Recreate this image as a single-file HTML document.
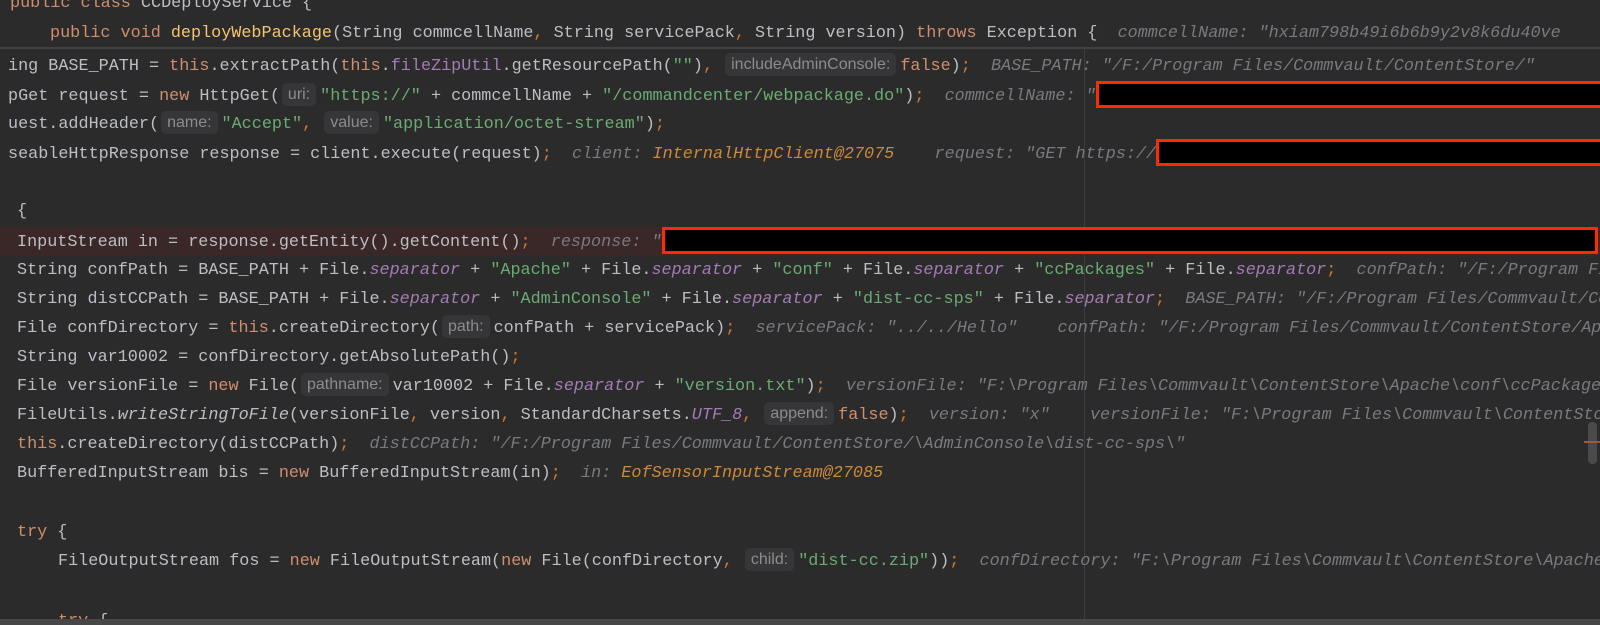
<!DOCTYPE html>
<html><head><meta charset="utf-8"><style>
html,body{margin:0;padding:0;overflow:hidden;}
body{width:1600px;height:625px;overflow:hidden;background:#2b2b2b;position:relative;font-family:"Liberation Mono",monospace;font-size:16.8px;color:#bcbec4;}
.wrap{position:absolute;left:0;top:0;width:1600px;height:625px;overflow:hidden;}
.l{position:absolute;white-space:pre;height:29px;line-height:29px;}
.k{color:#cf8e6d}.s{color:#6aab73}.f{color:#a57bb5;font-style:italic}.y{color:#f5c46e}
.o{color:#cc7832}
.c{color:#787a7f;font-style:italic}
.ci{color:#cc8a36;font-style:italic}
.h{display:inline-block;font-family:"Liberation Sans",sans-serif;font-size:16px;color:#8c8c8c;background:#363638;border-radius:5px;padding:0 6px;line-height:23px;height:23px;vertical-align:1px;margin:0 4px 0 2px;}
.box{display:inline-block;background:#000;border:3px solid #ff2a00;height:21px;vertical-align:-8px;box-sizing:content-box;}
.it{font-style:italic}
</style></head><body><div class="wrap">
<div style="position:absolute;left:0;top:47px;width:1600px;height:2px;background:#414141"></div>
<div style="position:absolute;left:0;top:227px;width:1600px;height:29px;background:#3a2727"></div>
<div style="position:absolute;left:1084px;top:49px;width:1px;height:570px;background:#3d3d3d"></div>

<div class="l" style="left:10px;top:-11px"><span class="k">public class</span> CCDeployService {</div>
<div class="l" style="left:50px;top:19px"><span class="k">public void</span> <span class="y">deployWebPackage</span>(String commcellName<span class="o">,</span> String servicePack<span class="o">,</span> String version) <span class="k">throws</span> Exception {  <span class="c">commcellName: "hxiam798b49i6b6b9y2v8k6du40ve</span></div>

<div class="l" style="left:8px;top:52px">ing BASE_PATH = <span class="k">this</span>.extractPath(<span class="k">this</span>.<span class="f" style="font-style:normal">fileZipUtil</span>.getResourcePath(<span class="s">""</span>)<span class="o">,</span> <span class="h">includeAdminConsole:</span><span class="k">false</span>)<span class="o">;</span>  <span class="c">BASE_PATH: "/F:/Program Files/Commvault/ContentStore/"</span></div>
<div class="l" style="left:8px;top:81px">pGet request = <span class="k">new</span> HttpGet(<span class="h">uri:</span><span class="s">"https://"</span> + commcellName + <span class="s">"/commandcenter/webpackage.do"</span>)<span class="o">;</span>  <span class="c">commcellName: "</span><span class="box" style="width:520px"></span></div>
<div class="l" style="left:8px;top:110px">uest.addHeader(<span class="h">name:</span><span class="s">"Accept"</span><span class="o">,</span> <span class="h">value:</span><span class="s">"application/octet-stream"</span>)<span class="o">;</span></div>
<div class="l" style="left:8px;top:139px">seableHttpResponse response = client.execute(request)<span class="o">;</span>  <span class="c">client: </span><span class="ci">InternalHttpClient@27075</span>    <span class="c">request: "GET https://</span><span class="box" style="width:460px"></span></div>
<div class="l" style="left:17px;top:197px">{</div>
<div class="l" style="left:17px;top:227px">InputStream in = response.getEntity().getContent()<span class="o">;</span>  <span class="c">response: "</span><span class="box" style="width:930px"></span></div>
<div class="l" style="left:17px;top:256px">String confPath = BASE_PATH + File.<span class="f">separator</span> + <span class="s">"Apache"</span> + File.<span class="f">separator</span> + <span class="s">"conf"</span> + File.<span class="f">separator</span> + <span class="s">"ccPackages"</span> + File.<span class="f">separator</span><span class="o">;</span>  <span class="c">confPath: "/F:/Program Files/Commvault/ContentStore/Apache"</span></div>
<div class="l" style="left:17px;top:285px">String distCCPath = BASE_PATH + File.<span class="f">separator</span> + <span class="s">"AdminConsole"</span> + File.<span class="f">separator</span> + <span class="s">"dist-cc-sps"</span> + File.<span class="f">separator</span><span class="o">;</span>  <span class="c">BASE_PATH: "/F:/Program Files/Commvault/ContentStore/"</span></div>
<div class="l" style="left:17px;top:314px">File confDirectory = <span class="k">this</span>.createDirectory(<span class="h">path:</span>confPath + servicePack)<span class="o">;</span>  <span class="c">servicePack: "../../Hello"    confPath: "/F:/Program Files/Commvault/ContentStore/Apache"</span></div>
<div class="l" style="left:17px;top:343px">String var10002 = confDirectory.getAbsolutePath()<span class="o">;</span></div>
<div class="l" style="left:17px;top:372px">File versionFile = <span class="k">new</span> File(<span class="h">pathname:</span>var10002 + File.<span class="f">separator</span> + <span class="s">"version.txt"</span>)<span class="o">;</span>  <span class="c">versionFile: "F:\Program Files\Commvault\ContentStore\Apache\conf\ccPackages"</span></div>
<div class="l" style="left:17px;top:401px">FileUtils.<span class="it">writeStringToFile</span>(versionFile<span class="o">,</span> version<span class="o">,</span> StandardCharsets.<span class="f">UTF_8</span><span class="o">,</span> <span class="h">append:</span><span class="k">false</span>)<span class="o">;</span>  <span class="c">version: "x"    versionFile: "F:\Program Files\Commvault\ContentStore\Apache"</span></div>
<div class="l" style="left:17px;top:430px"><span class="k">this</span>.createDirectory(distCCPath)<span class="o">;</span>  <span class="c">distCCPath: "/F:/Program Files/Commvault/ContentStore/\AdminConsole\dist-cc-sps\"</span></div>
<div class="l" style="left:17px;top:459px">BufferedInputStream bis = <span class="k">new</span> BufferedInputStream(in)<span class="o">;</span>  <span class="c">in: </span><span class="ci">EofSensorInputStream@27085</span></div>
<div class="l" style="left:17px;top:518px"><span class="k">try</span> {</div>
<div class="l" style="left:58px;top:547px">FileOutputStream fos = <span class="k">new</span> FileOutputStream(<span class="k">new</span> File(confDirectory<span class="o">,</span> <span class="h">child:</span><span class="s">"dist-cc.zip"</span>))<span class="o">;</span>  <span class="c">confDirectory: "F:\Program Files\Commvault\ContentStore\Apache"</span></div>
<div class="l" style="left:58px;top:607px"><span class="k">try</span> {</div>

<div style="position:absolute;left:1588px;top:422px;width:9px;height:42px;background:#4a4a4a;border-radius:4px"></div>
<div style="position:absolute;left:1584px;top:441px;width:16px;height:2px;background:#a5553a"></div>
<div style="position:absolute;left:0;top:619px;width:1600px;height:6px;background:#474747"></div>
</div></body></html>
